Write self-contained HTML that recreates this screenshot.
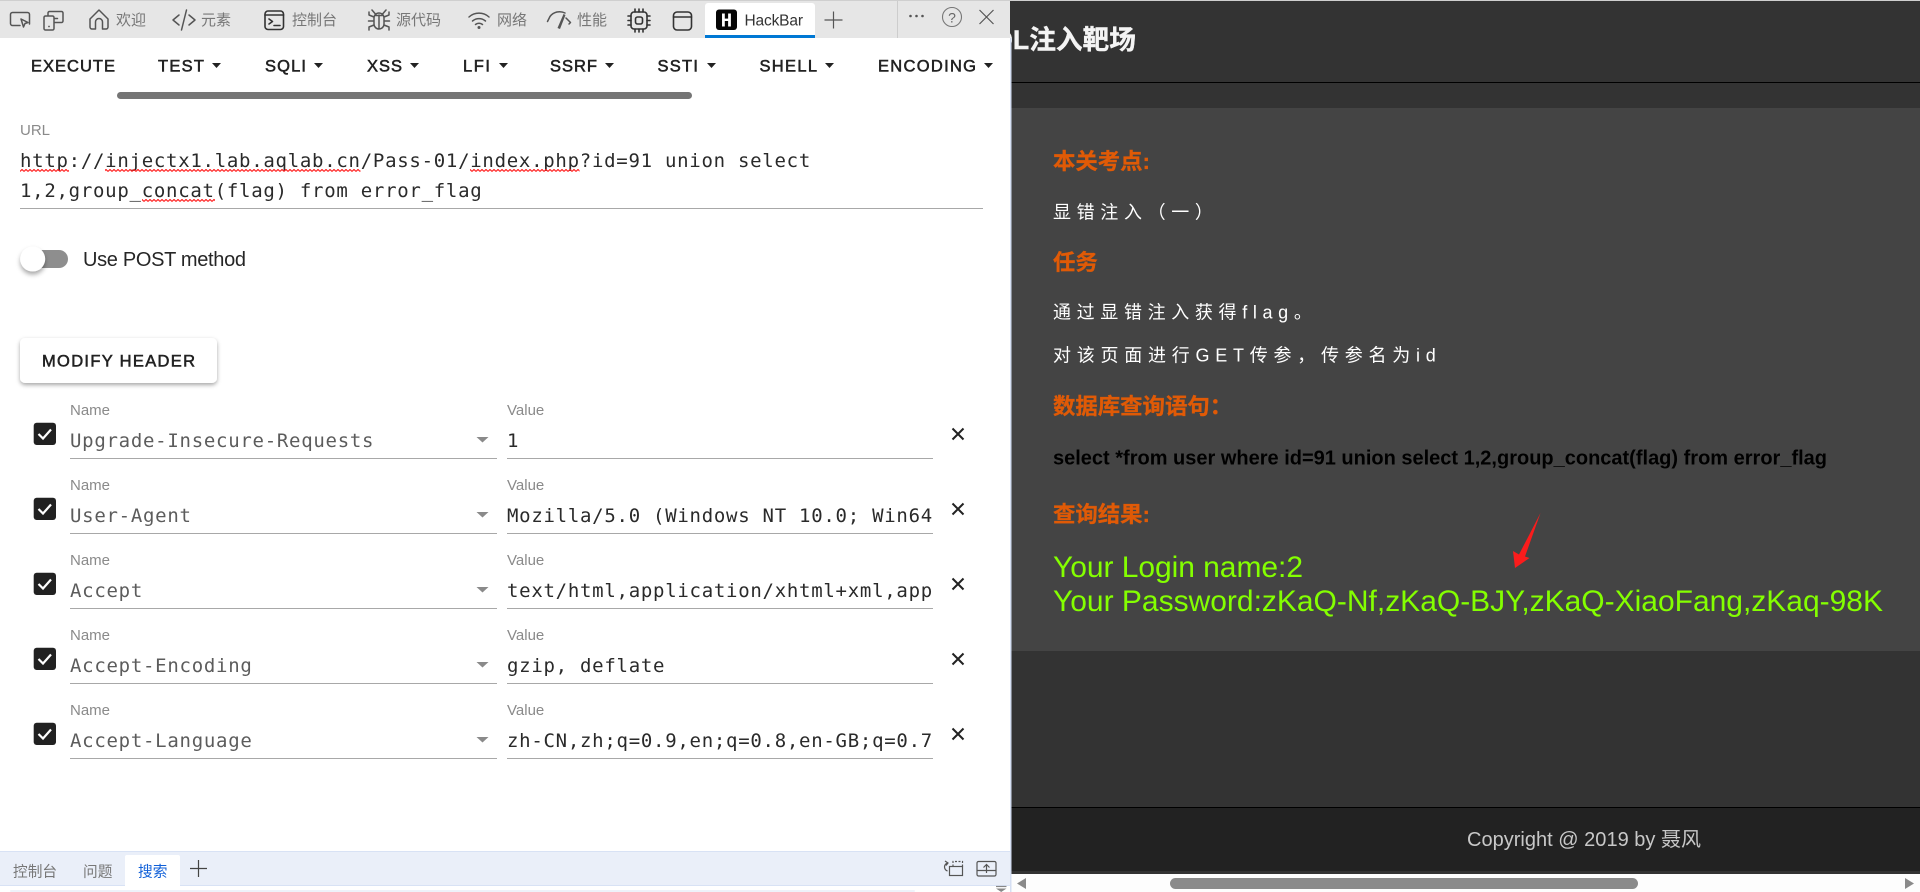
<!DOCTYPE html>
<html lang="zh-CN">
<head>
<meta charset="utf-8">
<title>HackBar - SQL注入靶场</title>
<style>
html,body{margin:0;padding:0;width:1920px;height:892px;overflow:hidden;background:#fff}
svg{display:block;position:absolute;left:0;top:0}
text{white-space:pre}
.tab{font:15px "Liberation Sans","Noto Sans CJK SC",sans-serif;fill:#777}
.m{font:16.5px "Liberation Sans",sans-serif;fill:#222;stroke:#222;stroke-width:.55}
.lab{font:15px "Liberation Sans",sans-serif;fill:#8a8a8a}
.mono{font:19px "DejaVu Sans Mono","Liberation Mono",monospace;letter-spacing:.73px;fill:#2a2a2a}
.sel{fill:#5c5c5c}
.h{font:bold 22.4px "Liberation Sans","Noto Sans CJK SC",sans-serif;fill:#e05a06;stroke:#e05a06;stroke-width:.3}
.p{font:18px "Liberation Sans","Noto Sans CJK SC",sans-serif;fill:#fff;letter-spacing:5.65px}
.g{font:30px "Liberation Sans",sans-serif;fill:#84ff00}
.i{fill:none;stroke:#555;stroke-width:1.5;stroke-linecap:round;stroke-linejoin:round}
.d{fill:none;stroke:#333;stroke-width:1.6;stroke-linecap:round;stroke-linejoin:round}
.x{fill:none;stroke:#222;stroke-width:2}
</style>
</head>
<body>
<svg width="1920" height="892" viewBox="0 0 1920 892" xmlns="http://www.w3.org/2000/svg">
<defs>
<pattern id="w" width="4" height="3" patternUnits="userSpaceOnUse" patternTransform="translate(0 1)"><path d="M0 2.500L2 .5L4 2.500" fill="none" stroke="#ff1f1f" stroke-width="1.200"/></pattern>
<filter id="s1" x="-20%" y="-30%" width="140%" height="170%"><feDropShadow dx="0" dy="2" stdDeviation="2" flood-color="#000" flood-opacity=".35"/></filter>
<filter id="s2" x="-50%" y="-50%" width="200%" height="220%"><feDropShadow dx="0" dy="3" stdDeviation="2.5" flood-color="#000" flood-opacity=".35"/></filter>
</defs>

<!-- right page -->
<rect x="1000" y="0" width="920" height="892" fill="#333"/>
<rect x="1000" y="82" width="920" height="1" fill="#000"/>
<rect x="1000" y="108" width="920" height="543" fill="#444"/>
<rect x="1000" y="807" width="920" height="1" fill="#000"/>
<rect x="1000" y="808" width="920" height="63" fill="#222"/>
<text x="1136" y="49" text-anchor="end" style="font:bold 26.7px 'Liberation Sans','Noto Sans CJK SC',sans-serif;fill:#f4f4f4;stroke:#f4f4f4;stroke-width:.4">SQL注入靶场</text>
<text class="h" x="1053" y="169">本关考点:</text>
<text class="p" x="1053" y="218.5">显错注入（一）</text>
<text class="h" x="1053" y="270">任务</text>
<text class="p" x="1053" y="318.5">通过显错注入获得flag。</text>
<text class="p" x="1053" y="361.5" style="letter-spacing:5.75px">对该页面进行GET传参，传参名为id</text>
<text class="h" x="1053" y="414">数据库查询语句：</text>
<text x="1053" y="464.5" textLength="774" style="font:bold 20px 'Liberation Sans',sans-serif;fill:#000">select *from user where id=91 union select 1,2,group_concat(flag) from error_flag</text>
<text class="h" x="1053" y="522">查询结果:</text>
<text class="g" x="1053" y="577" textLength="250">Your Login name:2</text>
<text class="g" x="1053" y="611" textLength="830">Your Password:zKaQ-Nf,zKaQ-BJY,zKaQ-XiaoFang,zKaq-98K</text>
<polygon points="1540.500,513 1525,556.500 1529.500,558 1515,568 1513,551 1519,554.500" fill="#fb1c1c"/>
<text x="1467" y="846" textLength="234" style="font:20px 'Liberation Sans','Noto Sans CJK SC',sans-serif;fill:#c8c8c8">Copyright @ 2019 by 聂风</text>

<!-- page scrollbar -->
<rect x="1011" y="874" width="909" height="18" fill="#fdfdfd"/>
<polygon points="1026,878 1026,889 1017,883.500" fill="#8a8a8a"/>
<polygon points="1905,878 1905,889 1914,883.500" fill="#8a8a8a"/>
<rect x="1170" y="878" width="468" height="11" rx="5.5" fill="#8a8a8a"/>

<!-- left panel -->
<rect x="0" y="38" width="1010" height="854" fill="#fff"/>
<rect x="1010" y="38" width="1.500" height="854" fill="#d5dff3"/>
<rect x="0" y="1" width="1010" height="37" fill="#e6e6e6"/>
<rect x="0" y="0" width="1920" height="1" fill="#cfcfcf"/>
<rect x="897" y="1" width="1" height="37" fill="#cdcdcd"/>

<!-- toolbar icons -->
<path class="i" d="M20 25.500H12.500a2 2 0 0 1-2-2V14.500a2 2 0 0 1 2-2h15a2 2 0 0 1 2 2V24"/>
<path class="i" d="M21 19l7 3.500-3 1-1.500 3.500z"/>
<path class="i" d="M45.500 16h7a1.500 1.500 0 0 1 1.500 1.500v11a1.500 1.500 0 0 1-1.500 1.500h-7a1.500 1.500 0 0 1-1.500-1.500v-11a1.500 1.500 0 0 1 1.500-1.500zM48 16v-3a1.500 1.500 0 0 1 1.500-1.500h12a1.500 1.500 0 0 1 1.500 1.500v8a1.500 1.500 0 0 1-1.500 1.500H55M55 18.500h2.500"/>
<circle cx="49" cy="26.500" r=".9" fill="#555"/>
<path class="i" d="M90 19L99 10l9 9v8a2 2 0 0 1-2 2h-3.500v-7a3.500 3.500 0 0 0-7 0v7H92a2 2 0 0 1-2-2z"/>
<text class="tab" x="116" y="25">欢迎</text>
<path class="i" d="M179 15l-6 5 6 5M189 15l6 5-6 5M186.500 10l-5 20"/>
<text class="tab" x="201" y="25">元素</text>
<rect class="d" x="265" y="11" width="18.500" height="18.500" rx="3"/>
<path class="d" d="M265 15h18.500M269 19l3.500 2.500-3.500 2.500M274 25.500h6"/>
<text class="tab" x="292" y="25">控制台</text>
<path class="i" d="M374 18a5 5 0 0 1 10 0v6a5 5 0 0 1-10 0zM375 13.500l-3-3.500M383 13.500l3-3.500M374 17l-5-2v-3M374 21h-5.500M374 25l-5 2v3M384 17l5-2v-3M384 21h5.500M384 25l5 2v3M379 15v14M375 15.500h8"/>
<text class="tab" x="396" y="25">源代码</text>
<path class="i" d="M469 17a15 15 0 0 1 20 0M472.500 21a10 10 0 0 1 13 0M475.500 24.500a5.500 5.500 0 0 1 7 0"/>
<circle cx="479" cy="27.500" r="1.500" fill="#555"/>
<text class="tab" x="497" y="25">网络</text>
<path class="i" d="M547.500 21.500l2.500-5a12 12 0 0 1 15-3.500"/>
<path class="i" d="M566 18l4.500 4.500-1.500 1.500"/>
<path d="M563.500 14l-6 14 2.500 1 5.500-14z" fill="#555"/>
<text class="tab" x="577" y="25">性能</text>
<rect class="d" x="631" y="12" width="16" height="17" rx="3"/>
<rect class="d" x="635.500" y="17" width="7" height="7" rx="2"/>
<path class="d" stroke-width="1.200" d="M635 9v3M639 9v3M643 9v3M635 29v3M639 29v3M643 29v3M628 16h3M628 20.500h3M628 25h3M647 16h3M647 20.500h3M647 25h3"/>
<rect class="d" x="673.500" y="12" width="18" height="18" rx="3.500"/>
<path class="d" d="M673.500 17h18"/>

<!-- active tab -->
<path d="M705 38V6a3 3 0 0 1 3-3h104a3 3 0 0 1 3 3v32z" fill="#fff"/>
<rect x="705" y="35" width="110" height="3" fill="#0078d4"/>
<rect x="716" y="9.500" width="21" height="20.500" rx="3" fill="#050505"/>
<text x="726.500" y="26.500" text-anchor="middle" style="font:bold 19px 'Liberation Mono',monospace;fill:#fff">H</text>
<text x="744.500" y="25.500" textLength="58.500" style="font:15.500px 'Liberation Sans',sans-serif;fill:#333">HackBar</text>
<path d="M833.500 11.500v17M824.500 20h18" fill="none" stroke="#555" stroke-width="1.200"/>
<g fill="#555"><circle cx="910.500" cy="16" r="1.300"/><circle cx="916.500" cy="16" r="1.300"/><circle cx="922.500" cy="16" r="1.300"/></g>
<circle cx="952" cy="17" r="9.500" fill="none" stroke="#777" stroke-width="1.100"/>
<text x="952" y="22.500" text-anchor="middle" style="font:14px 'Liberation Sans',sans-serif;fill:#666">?</text>
<path d="M979.500 10l14 14M993.500 10l-14 14" fill="none" stroke="#555" stroke-width="1.200"/>

<!-- HackBar menu -->
<text class="m" x="31" y="71.500" textLength="84">EXECUTE</text>
<text class="m" x="158" y="71.500" textLength="46">TEST</text>
<text class="m" x="265" y="71.500" textLength="41">SQLI</text>
<text class="m" x="367" y="71.500" textLength="35">XSS</text>
<text class="m" x="463" y="71.500" textLength="27">LFI</text>
<text class="m" x="550" y="71.500" textLength="47">SSRF</text>
<text class="m" x="657.500" y="71.500" textLength="40.500">SSTI</text>
<text class="m" x="759.500" y="71.500" textLength="57.500">SHELL</text>
<text class="m" x="878" y="71.500" textLength="98">ENCODING</text>
<g fill="#222">
<polygon points="212,63 221,63 216.500,68"/>
<polygon points="314,63 323,63 318.500,68"/>
<polygon points="410,63 419,63 414.500,68"/>
<polygon points="499,63 508,63 503.500,68"/>
<polygon points="605,63 614,63 609.500,68"/>
<polygon points="707,63 716,63 711.500,68"/>
<polygon points="825,63 834,63 829.500,68"/>
<polygon points="984,63 993,63 988.500,68"/>
</g>
<rect x="117" y="92" width="575" height="7" rx="3.500" fill="#757575"/>

<!-- URL -->
<text class="lab" x="20" y="135">URL</text>
<text class="mono" x="20" y="167">http://injectx1.lab.aqlab.cn/Pass-01/index.php?id=91 union select</text>
<text class="mono" x="20" y="197">1,2,group_concat(flag) from error_flag</text>
<rect x="20" y="169" width="49" height="3" fill="url(#w)"/>
<rect x="105" y="169" width="255.500" height="3" fill="url(#w)"/>
<rect x="470" y="169" width="109.500" height="3" fill="url(#w)"/>
<rect x="142" y="199" width="73" height="3" fill="url(#w)"/>
<rect x="20" y="208" width="963" height="1" fill="#a8a8a8"/>

<!-- switch -->
<rect x="30" y="250" width="38" height="18" rx="9" fill="#8e8e8e"/>
<circle cx="32.700" cy="259" r="12.500" fill="#fff" filter="url(#s2)"/>
<text x="83" y="266" textLength="163" style="font:20px 'Liberation Sans',sans-serif;fill:#262626">Use POST method</text>

<!-- button -->
<rect x="20" y="338" width="197" height="45" rx="5" fill="#fff" filter="url(#s1)"/>
<text class="m" x="42" y="366.500" textLength="153">MODIFY HEADER</text>

<!-- row 1 -->
<g>
<text class="lab" x="70" y="415">Name</text><text class="lab" x="507" y="415">Value</text>
<rect x="33.700" y="422.700" width="22.300" height="22.300" rx="3" fill="#212121"/>
<path d="M38.500 434l4.500 4.500 8-9" fill="none" stroke="#fff" stroke-width="2.200"/>
<text class="mono sel" x="70" y="447">Upgrade-Insecure-Requests</text>
<polygon points="476.500,437 488.500,437 482.500,442.500" fill="#8a8a8a"/>
<rect x="70" y="458" width="427" height="1" fill="#a8a8a8"/>
<text class="mono" x="507" y="447">1</text>
<rect x="507" y="458" width="426" height="1" fill="#a8a8a8"/>
<path class="x" d="M952.500 428.500l11 11M963.500 428.500l-11 11"/>
</g>
<!-- row 2 -->
<g>
<text class="lab" x="70" y="490">Name</text><text class="lab" x="507" y="490">Value</text>
<rect x="33.700" y="497.700" width="22.300" height="22.300" rx="3" fill="#212121"/>
<path d="M38.500 509l4.500 4.500 8-9" fill="none" stroke="#fff" stroke-width="2.200"/>
<text class="mono sel" x="70" y="522">User-Agent</text>
<polygon points="476.500,512 488.500,512 482.500,517.500" fill="#8a8a8a"/>
<rect x="70" y="533" width="427" height="1" fill="#a8a8a8"/>
<text class="mono" x="507" y="522">Mozilla/5.0 (Windows NT 10.0; Win64</text>
<rect x="507" y="533" width="426" height="1" fill="#a8a8a8"/>
<path class="x" d="M952.500 503.500l11 11M963.500 503.500l-11 11"/>
</g>
<!-- row 3 -->
<g>
<text class="lab" x="70" y="565">Name</text><text class="lab" x="507" y="565">Value</text>
<rect x="33.700" y="572.700" width="22.300" height="22.300" rx="3" fill="#212121"/>
<path d="M38.500 584l4.500 4.500 8-9" fill="none" stroke="#fff" stroke-width="2.200"/>
<text class="mono sel" x="70" y="597">Accept</text>
<polygon points="476.500,587 488.500,587 482.500,592.500" fill="#8a8a8a"/>
<rect x="70" y="608" width="427" height="1" fill="#a8a8a8"/>
<text class="mono" x="507" y="597">text/html,application/xhtml+xml,app</text>
<rect x="507" y="608" width="426" height="1" fill="#a8a8a8"/>
<path class="x" d="M952.500 578.500l11 11M963.500 578.500l-11 11"/>
</g>
<!-- row 4 -->
<g>
<text class="lab" x="70" y="640">Name</text><text class="lab" x="507" y="640">Value</text>
<rect x="33.700" y="647.700" width="22.300" height="22.300" rx="3" fill="#212121"/>
<path d="M38.500 659l4.500 4.500 8-9" fill="none" stroke="#fff" stroke-width="2.200"/>
<text class="mono sel" x="70" y="672">Accept-Encoding</text>
<polygon points="476.500,662 488.500,662 482.500,667.500" fill="#8a8a8a"/>
<rect x="70" y="683" width="427" height="1" fill="#a8a8a8"/>
<text class="mono" x="507" y="672">gzip, deflate</text>
<rect x="507" y="683" width="426" height="1" fill="#a8a8a8"/>
<path class="x" d="M952.500 653.500l11 11M963.500 653.500l-11 11"/>
</g>
<!-- row 5 -->
<g>
<text class="lab" x="70" y="715">Name</text><text class="lab" x="507" y="715">Value</text>
<rect x="33.700" y="722.700" width="22.300" height="22.300" rx="3" fill="#212121"/>
<path d="M38.500 734l4.500 4.500 8-9" fill="none" stroke="#fff" stroke-width="2.200"/>
<text class="mono sel" x="70" y="747">Accept-Language</text>
<polygon points="476.500,737 488.500,737 482.500,742.500" fill="#8a8a8a"/>
<rect x="70" y="758" width="427" height="1" fill="#a8a8a8"/>
<text class="mono" x="507" y="747">zh-CN,zh;q=0.9,en;q=0.8,en-GB;q=0.7</text>
<rect x="507" y="758" width="426" height="1" fill="#a8a8a8"/>
<path class="x" d="M952.500 728.500l11 11M963.500 728.500l-11 11"/>
</g>

<!-- bottom drawer -->
<rect x="0" y="851" width="1010" height="1" fill="#d8e2f5"/>
<rect x="0" y="852" width="1010" height="33" fill="#eaeff9"/>
<rect x="0" y="885" width="1010" height="1" fill="#d8e2f5"/>
<path d="M125 886V857a2 2 0 0 1 2-2h51a2 2 0 0 1 2 2v29z" fill="#fff"/>
<text x="13" y="876.500" style="font:14.700px 'Liberation Sans','Noto Sans CJK SC',sans-serif;fill:#777">控制台</text>
<text x="83" y="876.500" style="font:14.700px 'Liberation Sans','Noto Sans CJK SC',sans-serif;fill:#777">问题</text>
<text x="138" y="876.500" style="font:14.700px 'Liberation Sans','Noto Sans CJK SC',sans-serif;fill:#0f5fd8">搜索</text>
<path d="M198.500 860v17M190 868.500h17" fill="none" stroke="#444" stroke-width="1.200"/>
<rect x="949.500" y="866.500" width="13" height="9" fill="none" stroke="#555" stroke-width="1.200"/>
<path d="M953 866.500v-5h9.500v5" fill="none" stroke="#555" stroke-width="1.200" stroke-dasharray="2 1.500"/>
<path d="M947.500 863a4.500 4.500 0 0 0-3 4 4.500 4.500 0 0 0 3 4M945 861l3 2-2 2.500" fill="none" stroke="#555" stroke-width="1.200"/>
<rect x="977" y="861.500" width="19" height="14.500" rx="1.500" fill="none" stroke="#555" stroke-width="1.200"/>
<path d="M977 870.500h19M986.500 873v-8M983.500 867.500l3-3 3 3" fill="none" stroke="#555" stroke-width="1.200"/>
<rect x="10" y="890" width="905" height="2" rx="1" fill="#eef2fa"/>
<path d="M996 886.500h10.500" stroke="#888" stroke-width="1.200"/>
<polygon points="996,888.500 1006.500,888.500 1001.200,892" fill="#888"/>
</svg>
</body>
</html>
